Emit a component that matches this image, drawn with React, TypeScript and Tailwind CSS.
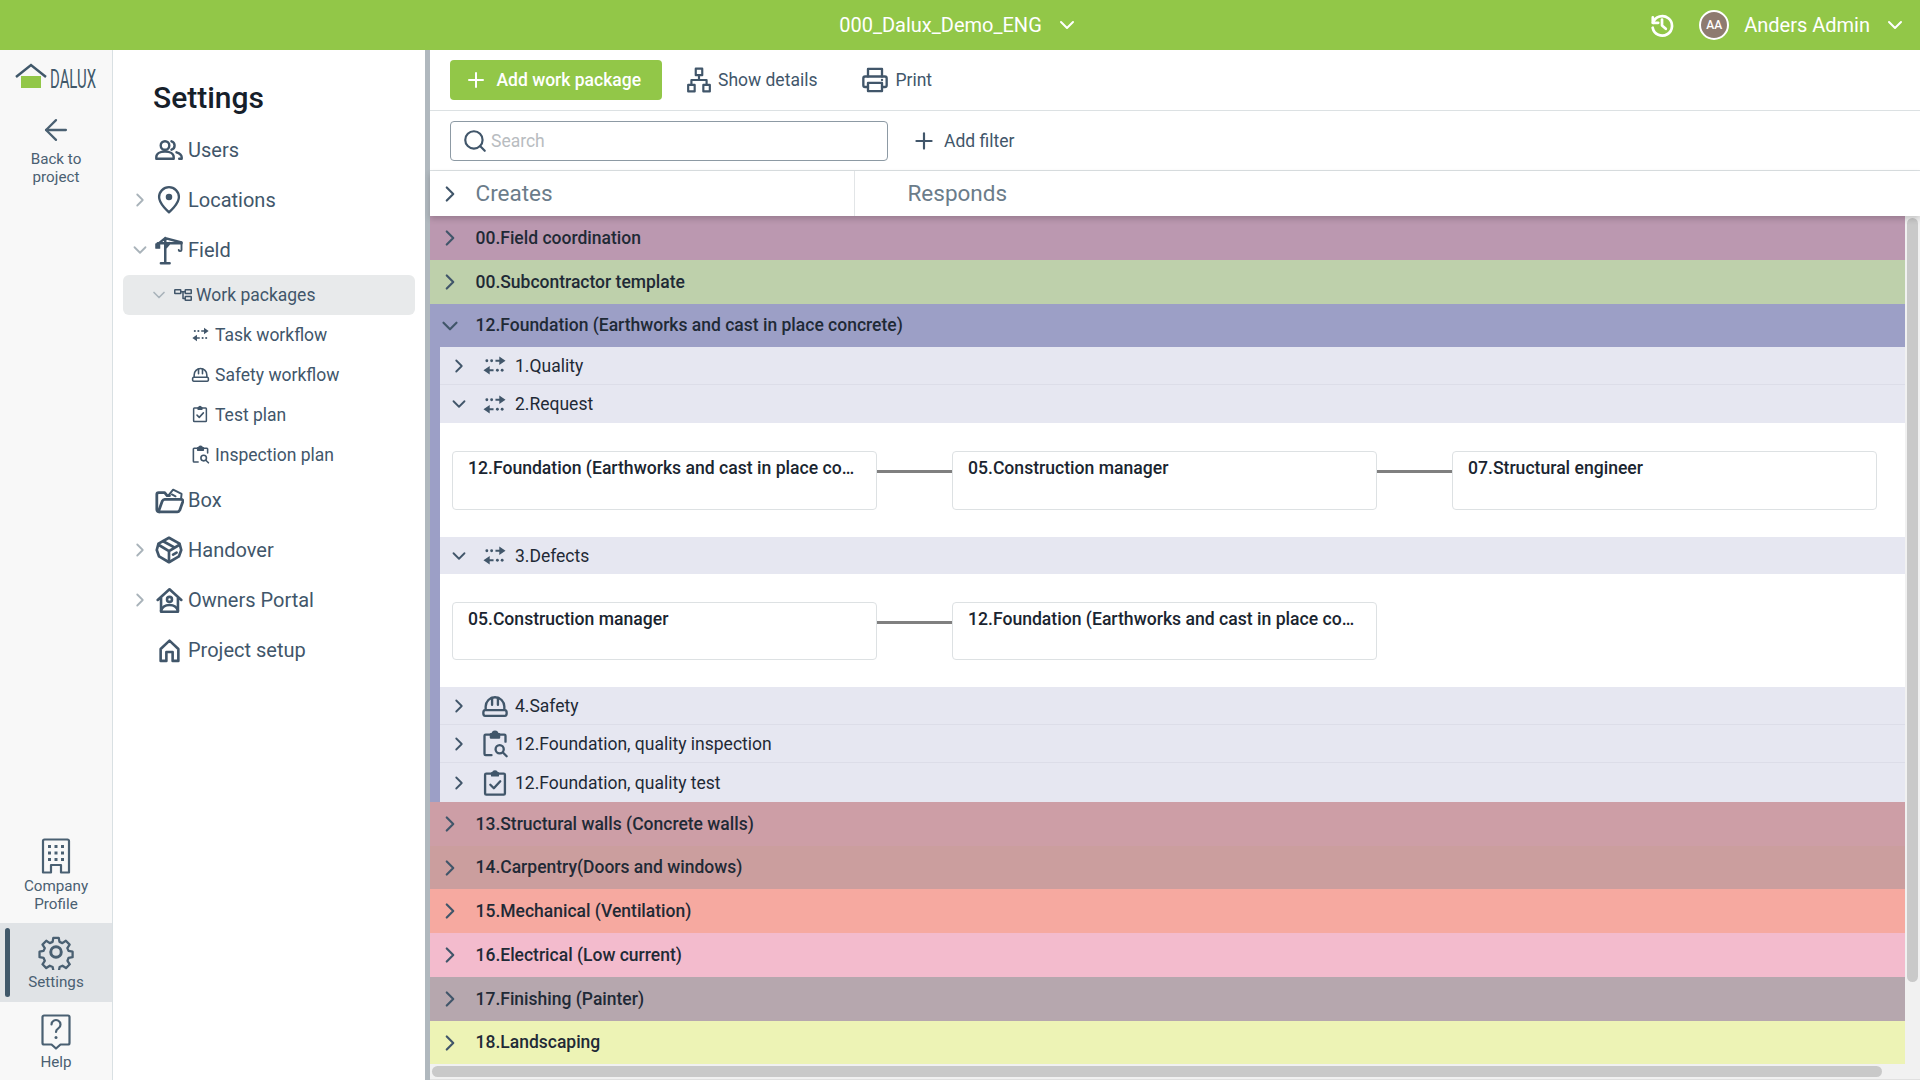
import { ArrowLeft, ChevronDown, ChevronRight, Plus, Search } from "lucide-react";
import type { ReactNode } from "react";

type IconProps = { className?: string };

const Svg = ({ className, children }: IconProps & { children: ReactNode }) => (
  <svg
    viewBox="0 0 24 24"
    fill="none"
    stroke="currentColor"
    strokeWidth={2}
    strokeLinecap="round"
    strokeLinejoin="round"
    className={className}
  >
    {children}
  </svg>
);

const UsersIcon = ({ className }: IconProps) => (
  <svg
    viewBox="0 0 28 20"
    fill="none"
    stroke="currentColor"
    strokeWidth={2.4}
    strokeLinecap="round"
    strokeLinejoin="round"
    className={className}
  >
    <circle cx="10" cy="5.500" r="4.300" />
    <path d="M1.300 18.800v-1.800c0-3.500 4-5.500 8.700-5.500s8.700 2 8.700 5.500v1.800z" />
    <path d="M16.500 1.300a4.400 4.400 0 0 1 0 8.400" />
    <path d="M21.500 12.300c3.200 1 5.200 2.500 5.200 5v1.500h-2.500" />
  </svg>
);
const PinIcon = ({ className }: IconProps) => (
  <Svg className={className}>
    <path d="M12 22.500s-8.500-7-8.500-13a8.500 8.500 0 0 1 17 0c0 6-8.500 13-8.500 13z" />
    <circle cx="12" cy="9.500" r="1.800" fill="currentColor" />
  </Svg>
);
const CraneIcon = ({ className }: IconProps) => (
  <Svg className={className}>
    <path d="M3 6.500h19M9 2.500 4 6.500M9 2.500l13 3.500M9 3v19M5.500 22.500h7M12.500 6.500l-3.500 4" />
    <path d="M1.500 7h3v3.500h-3z" fill="currentColor" strokeWidth={1} />
    <path d="M22 6v6c0 1.200-2 1.200-2.200 0" strokeWidth={1.500} />
  </Svg>
);
const PackagesIcon = ({ className }: IconProps) => (
  <Svg className={className}>
    <rect x="1" y="5" width="8" height="5" rx=".5" />
    <rect x="15" y="5" width="8" height="5" rx=".5" />
    <rect x="15" y="14" width="8" height="5" rx=".5" />
    <path d="M9 7.500h6M12 7.500v9h3" />
  </Svg>
);
const WorkflowIcon = ({ className }: IconProps) => (
  <svg viewBox="0 0 24 24" fill="currentColor" stroke="none" className={className}>
    <path d="M13 6h4V2.500L23.500 7 17 11.500V8h-4z" />
    <path d="M11 16H7v-3.500L.5 17 7 21.500V18h4z" />
    <circle cx="4" cy="7" r="1.500" />
    <circle cx="9" cy="7" r="1.500" />
    <circle cx="15" cy="17" r="1.500" />
    <circle cx="20" cy="17" r="1.500" />
  </svg>
);
const HatIcon = ({ className }: IconProps) => (
  <Svg className={className}>
    <path d="M4 15v-2.500a8 8 0 0 1 16 0V15" />
    <path d="M9.500 5v6M14.500 5v6" />
    <path d="M3.500 15.500h17c1 0 1.500 1 1.500 2.500s-.5 2.500-1.500 2.500h-17C2.500 20.500 2 19.500 2 18s.5-2.500 1.500-2.500z" />
  </Svg>
);
const ClipCheckIcon = ({ className }: IconProps) => (
  <Svg className={className}>
    <path d="M9.500 4H4.500a1 1 0 0 0-1 1v16a1 1 0 0 0 1 1h15a1 1 0 0 0 1-1V5a1 1 0 0 0-1-1h-5" />
    <path d="M9.500 5.500V3.500h1a1.500 1.500 0 0 1 3 0h1v2z" fill="currentColor" />
    <path d="m8 13.500 3 3 5.500-6" />
  </Svg>
);
const ClipSearchIcon = ({ className }: IconProps) => (
  <Svg className={className}>
    <path d="M8.500 4H4a1 1 0 0 0-1 1v15.500a1 1 0 0 0 1 1h5M15.500 4H20a1 1 0 0 1 1 1v5" />
    <path d="M8.500 6.500V3.500h1.500a2 2 0 0 1 4 0h1.500v3z" fill="currentColor" />
    <circle cx="16" cy="16.500" r="3.500" />
    <path d="m19 19.500 3 3" />
  </Svg>
);
const BoxFolderIcon = ({ className }: IconProps) => (
  <svg
    viewBox="0 0 24 24"
    fill="none"
    stroke="currentColor"
    strokeWidth={2.3}
    strokeLinecap="round"
    strokeLinejoin="round"
    className={className}
  >
    <path d="M3.500 21.500c-1.200 0-2-.8-2-2V7c0-1 .8-1.500 1.500-1.500h5l2 2.500h2" />
    <path d="M3.500 21.500h15c1 0 1.500-.6 2-1.500l2.500-7c.3-1-.3-2-1.300-2H8c-1 0-1.500.5-2 1.500l-2.500 7" />
    <path d="m11 8 4-5 7 3.500-.5 4.500M14 7l3 1.500" strokeWidth={1.600} />
  </svg>
);
const HandoverIcon = ({ className }: IconProps) => (
  <svg
    viewBox="0 0 24 24"
    fill="none"
    stroke="currentColor"
    strokeWidth={2.3}
    strokeLinecap="round"
    strokeLinejoin="round"
    className={className}
  >
    <path d="M12 1.500 3 6.500 1.500 12 3.500 17.500 12 22.500l8.500-5 2-5.500L21 6.500z" />
    <path d="M3 7.500 12 13l9-5.500M12 13v9M7 4.500l10 5.500" />
    <path d="m15.500 16 3-1.700" />
  </svg>
);
const OwnersIcon = ({ className }: IconProps) => (
  <svg
    viewBox="0 0 24 24"
    fill="none"
    stroke="currentColor"
    strokeWidth={2.3}
    strokeLinecap="round"
    strokeLinejoin="round"
    className={className}
  >
    <path d="M1.500 11.500 12 2l10.500 9.500M4.500 9.500V22h15V9.500" />
    <circle cx="12" cy="11" r="2.200" />
    <path d="M4.500 21c1-3.500 4-5 7.500-5s6.500 1.500 7.500 5" />
  </svg>
);
const HomeIcon = ({ className }: IconProps) => (
  <svg
    viewBox="0 0 24 24"
    fill="none"
    stroke="currentColor"
    strokeWidth={2.5}
    strokeLinecap="round"
    strokeLinejoin="round"
    className={className}
  >
    <path d="M3.500 22V10.500L12 2.500l8.500 8V22H15v-8.500H9V22z" />
  </svg>
);
const CompanyIcon = ({ className }: IconProps) => (
  <svg viewBox="0 0 30 36" fill="none" stroke="currentColor" strokeWidth={2.2} strokeLinejoin="round" className={className}>
    <path d="M2 3a1.500 1.500 0 0 1 1.500-1.500h23A1.500 1.500 0 0 1 28 3v31.500h-8V27H10v7.500H2z" />
    <g fill="currentColor" stroke="none">
      {[7, 13.5, 20].map((y) =>
        [7, 13.5, 20].map((x) => <rect key={`${x}-${y}`} x={x} y={y} width="3" height="3" />)
      )}
    </g>
  </svg>
);
const GearIcon = ({ className }: IconProps) => (
  <svg viewBox="0 0 24 24" fill="none" stroke="currentColor" strokeWidth={1.7} strokeLinejoin="round" className={className}>
    <path d="M10 1.500h4l.6 3 2.100.9 2.600-1.700 2.800 2.800-1.700 2.600.9 2.100 3 .6v4l-3 .6-.8 2.100 1.700 2.600-2.800 2.800-2.600-1.700-2.100.9-.6 3h-4l-.6-3-2.100-.9-2.600 1.700-2.800-2.800 1.700-2.600-.9-2.100-3-.6v-4l3-.6.900-2.100-1.700-2.600 2.800-2.800 2.600 1.700 2.100-.9z" transform="translate(1.200 1.200) scale(.9)" />
    <circle cx="12" cy="12" r="3.500" strokeWidth={2} />
  </svg>
);
const HelpIcon = ({ className }: IconProps) => (
  <svg viewBox="0 0 30 36" fill="none" stroke="currentColor" strokeWidth={2.2} strokeLinecap="round" strokeLinejoin="round" className={className}>
    <path d="M3 1.500h24a1.500 1.500 0 0 1 1.500 1.500v26a1.500 1.500 0 0 1-1.500 1.500h-7.500L15 34.500l-4.500-4H3A1.500 1.500 0 0 1 1.500 29V3A1.500 1.500 0 0 1 3 1.500z" />
    <path d="M10.500 10.500a4.500 4.500 0 1 1 6.800 3.900c-1.400.8-2.300 1.700-2.300 3.600" />
    <path d="M15 23.500h.01" strokeWidth={3} />
  </svg>
);
const HistoryIcon = ({ className }: IconProps) => (
  <svg
    viewBox="0 0 24 24"
    fill="none"
    stroke="currentColor"
    strokeWidth={2.5}
    strokeLinecap="round"
    strokeLinejoin="round"
    className={className}
  >
    <path d="M3.500 5v5h5" />
    <path d="M3.700 10a9 9 0 1 1-.3 4.500" />
    <path d="M12 7v5.500l3.500 3" />
  </svg>
);
const TreeIcon = ({ className }: IconProps) => (
  <Svg className={className}>
    <rect x="9" y="1.500" width="6" height="6" />
    <rect x="2" y="16.500" width="6" height="6" />
    <rect x="16" y="16.500" width="6" height="6" />
    <path d="M12 7.500V12M5 16.500V12h14v4.500" />
  </Svg>
);
const PrintIcon = ({ className }: IconProps) => (
  <Svg className={className}>
    <path d="M6 9V2.500h12V9" />
    <path d="M6 18H3.500A1.500 1.500 0 0 1 2 16.500v-6A1.500 1.500 0 0 1 3.500 9h17a1.500 1.500 0 0 1 1.500 1.500v6a1.500 1.500 0 0 1-1.500 1.500H18" />
    <path d="M6 14.500h12v7H6z" />
    <path d="M18 12h.01" />
  </Svg>
);

const DaluxLogo = () => (
  <svg viewBox="0 0 84 32" className="w-[84px] h-[32px] overflow-visible">
    <path d="M6 13h20v12H6z" fill="#92c748" />
    <path d="M1 14 16 2 31 14" fill="none" stroke="#40586a" strokeWidth="2.500" />
    <text
      x="35"
      y="25"
      fontSize="25"
      fontFamily="Roboto, sans-serif"
      fill="#40586a"
      textLength="46"
      lengthAdjust="spacingAndGlyphs"
    >
      DALUX
    </text>
  </svg>
);

const RailItem = ({ icon, label }: { icon: ReactNode; label: ReactNode }) => (
  <div className="flex flex-col items-center text-[15.200px] leading-[18px] text-center text-[#4a6072]">
    {icon}
    <div className="mt-[3px]">{label}</div>
  </div>
);

const navChevron = "w-[22px] h-[22px] text-[#a9b3ba] shrink-0";

const NavItem = ({ icon, label, chev }: { icon: ReactNode; label: string; chev?: "right" | "down" }) => (
  <div className="h-[50px] flex items-center text-[20px] text-[#41566a]">
    <div className="w-[30px] pl-[4px] flex justify-center">
      {chev === "right" && <ChevronRight className={navChevron} />}
      {chev === "down" && <ChevronDown className={navChevron} />}
    </div>
    <div className="w-[32px] flex justify-center">{icon}</div>
    <span className="ml-[3px]">{label}</span>
  </div>
);

const SubNavItem = ({ icon, label }: { icon: ReactNode; label: string }) => (
  <div className="h-[40px] flex items-center pl-[65px] text-[17.500px] text-[#41566a]">
    <div className="w-[24px] flex justify-center">{icon}</div>
    <span className="ml-[3px] mt-[2px]">{label}</span>
  </div>
);

const Sidebar = () => (
  <div className="w-[312px] h-full shrink-0 bg-white pt-[25px] pl-[10px] pr-[10px]">
    <h1 className="pl-[30px] h-[44px] flex items-center text-[30px] font-medium text-[#16202a]">Settings</h1>
    <div className="mt-[6px]">
      <NavItem icon={<UsersIcon className="w-[28px] h-[20px]" />} label="Users" />
      <NavItem icon={<PinIcon className="w-[28px] h-[28px]" />} label="Locations" chev="right" />
      <NavItem icon={<CraneIcon className="w-[30px] h-[30px]" />} label="Field" chev="down" />
      <div className="h-[40px] rounded-[6px] bg-[#e8eaeb] flex items-center pl-[26px] text-[17.500px] text-[#41566a]">
        <ChevronDown className="w-[20px] h-[20px] text-[#a9b3ba]" />
        <PackagesIcon className="ml-[4px] w-[20px] h-[18px]" />
        <span className="ml-[3px]">Work packages</span>
      </div>
      <div className="mt-[-1px]">
        <SubNavItem icon={<WorkflowIcon className="w-[17px] h-[17px]" />} label="Task workflow" />
        <SubNavItem icon={<HatIcon className="w-[19px] h-[19px]" />} label="Safety workflow" />
        <SubNavItem icon={<ClipCheckIcon className="w-[18px] h-[18px]" />} label="Test plan" />
        <SubNavItem icon={<ClipSearchIcon className="w-[19px] h-[19px]" />} label="Inspection plan" />
      </div>
      <div className="mt-[1px]">
        <NavItem icon={<BoxFolderIcon className="w-[29px] h-[29px]" />} label="Box" />
        <NavItem icon={<HandoverIcon className="w-[28px] h-[28px]" />} label="Handover" chev="right" />
        <NavItem icon={<OwnersIcon className="w-[27px] h-[27px]" />} label="Owners Portal" chev="right" />
        <NavItem icon={<HomeIcon className="w-[25px] h-[25px]" />} label="Project setup" />
      </div>
    </div>
  </div>
);

const Rail = () => (
  <div className="w-[113px] h-full shrink-0 bg-[#f8f8f8] border-r border-[#d9e0e3] flex flex-col">
    <div className="pt-[13px] pl-[15px]">
      <DaluxLogo />
    </div>
    <div className="mt-[18px]">
      <RailItem
        icon={<ArrowLeft className="w-[34px] h-[34px]" strokeWidth={1.6} />}
        label={
          <>
            Back to
            <br />
            project
          </>
        }
      />
    </div>
    <div className="mt-auto">
      <RailItem
        icon={<CompanyIcon className="w-[30px] h-[36px]" />}
        label={
          <>
            Company
            <br />
            Profile
          </>
        }
      />
      <div className="relative mt-[10px] h-[79px] bg-[#e0e3e6] pt-[11px]">
        <div className="absolute left-[5px] top-[5px] w-[5px] h-[69px] rounded-full bg-[#40586a]" />
        <RailItem icon={<GearIcon className="w-[36px] h-[36px]" />} label="Settings" />
      </div>
      <div className="h-[78px] pt-[12px]">
        <RailItem icon={<HelpIcon className="w-[30px] h-[36px]" />} label="Help" />
      </div>
    </div>
  </div>
);

const GroupRow = ({ label, color, open }: { label: string; color: string; open?: boolean }) => (
  <div className={`flex items-center text-[17.500px] font-medium text-[#1f2a36] ${color}`}>
    <div className="w-[45.500px] pl-[7px] flex justify-start text-[#41566a]">
      {open ? <ChevronDown className="w-[26px] h-[26px]" /> : <ChevronRight className="w-[26px] h-[26px]" />}
    </div>
    <span>{label}</span>
  </div>
);

const SubRow = ({ icon, label, open, h }: { icon: ReactNode; label: string; open?: boolean; h: string }) => (
  <div className={`flex items-center bg-[#e6e7f1] border-b border-[#dcdde8] text-[17.500px] text-[#1f2a36] ${h}`}>
    <div className="w-[38px] pl-[8px] text-[#41566a]">
      {open ? <ChevronDown className="w-[22px] h-[22px]" /> : <ChevronRight className="w-[22px] h-[22px]" />}
    </div>
    <div className="w-[33px] flex justify-center text-[#41566a]">{icon}</div>
    <span className="ml-[4px] mt-[1px]">{label}</span>
  </div>
);

const Card = ({ label, h }: { label: string; h: string }) => (
  <div className={`w-[425px] shrink-0 bg-white border border-[#dde1e3] rounded-[4px] pl-[15px] pt-[3px] text-[17.600px] font-medium text-[#1a2530] whitespace-nowrap ${h}`}>
    {label}
  </div>
);

const Connector = () => <div className="w-[75px] h-[3px] mt-[19px] shrink-0 bg-[#808080]" />;

const Tree = () => (
  <div className="flex-1 min-w-0 flex flex-col">
    <GroupRow label="00.Field coordination" color="h-[44px] bg-[#bb98b0]" />
    <GroupRow label="00.Subcontractor template" color="h-[44px] bg-[#bed0ab]" />
    <GroupRow label="12.Foundation (Earthworks and cast in place concrete)" color="h-[43px] bg-[#9c9fc6]" open />
    <div className="h-[455px] border-l-[10px] border-[#9c9fc6] flex flex-col">
      <SubRow h="h-[38px]" icon={<WorkflowIcon className="w-[23px] h-[23px]" />} label="1.Quality" />
      <SubRow h="h-[38px] border-b-0" icon={<WorkflowIcon className="w-[23px] h-[23px]" />} label="2.Request" open />
      <div className="h-[114px] bg-white pt-[28px] pl-[12px] flex">
        <Card h="h-[59px]" label="12.Foundation (Earthworks and cast in place co…" />
        <Connector />
        <Card h="h-[59px]" label="05.Construction manager" />
        <Connector />
        <Card h="h-[59px]" label="07.Structural engineer" />
      </div>
      <SubRow h="h-[37px] border-b-0" icon={<WorkflowIcon className="w-[23px] h-[23px]" />} label="3.Defects" open />
      <div className="h-[113px] bg-white pt-[28px] pl-[12px] flex">
        <Card h="h-[58px]" label="05.Construction manager" />
        <Connector />
        <Card h="h-[58px]" label="12.Foundation (Earthworks and cast in place co…" />
      </div>
      <SubRow h="h-[38px]" icon={<HatIcon className="w-[28px] h-[28px]" />} label="4.Safety" />
      <SubRow h="h-[38px]" icon={<ClipSearchIcon className="w-[28px] h-[28px]" />} label="12.Foundation, quality inspection" />
      <SubRow h="h-[39px] border-b-0" icon={<ClipCheckIcon className="w-[28px] h-[28px]" />} label="12.Foundation, quality test" />
    </div>
    <GroupRow label="13.Structural walls (Concrete walls)" color="h-[44px] bg-[#cd9ea6]" />
    <GroupRow label="14.Carpentry(Doors and windows)" color="h-[43px] bg-[#cb9e9e]" />
    <GroupRow label="15.Mechanical (Ventilation)" color="h-[44px] bg-[#f6a9a0]" />
    <GroupRow label="16.Electrical (Low current)" color="h-[44px] bg-[#f3bbcd]" />
    <GroupRow label="17.Finishing (Painter)" color="h-[44px] bg-[#b6a7ae]" />
    <GroupRow label="18.Landscaping" color="h-[43px] bg-[#edf3b5]" />
  </div>
);

const Main = () => (
  <div className="flex-1 min-w-0 h-full flex flex-col bg-white">
    <div className="h-[61px] shrink-0 border-b border-[#dce1e3] flex items-center pl-[20px] text-[17.500px] text-[#41566a]">
      <button className="h-[40px] w-[212px] rounded-[4px] bg-[#92c748] text-white font-medium flex items-center pl-[14px]">
        <Plus className="w-[24px] h-[24px]" strokeWidth={2} />
        <span className="ml-[8.500px]">Add work package</span>
      </button>
      <TreeIcon className="ml-[24px] w-[26px] h-[28px]" />
      <span className="ml-[6px]">Show details</span>
      <PrintIcon className="ml-[44px] w-[28px] h-[28px]" />
      <span className="ml-[6px]">Print</span>
    </div>
    <div className="h-[60px] shrink-0 border-b border-[#dce1e3] flex items-center pl-[20px] text-[17.500px] text-[#41566a]">
      <div className="w-[438px] h-[40px] border border-[#8d9aa4] rounded-[4px] flex items-center pl-[11px]">
        <Search className="w-[26px] h-[26px]" strokeWidth={2} />
        <span className="ml-[3px] mt-[2px] text-[#b8bcc0]">Search</span>
      </div>
      <Plus className="ml-[23px] w-[26px] h-[26px]" strokeWidth={2} />
      <span className="ml-[7px] mt-[2px]">Add filter</span>
    </div>
    <div className="relative z-10 h-[45px] shrink-0 flex items-center bg-white shadow-[0_3px_6px_rgba(0,0,0,0.18)] text-[22.500px] text-[#6b7c8a]">
      <div className="w-[425px] h-full border-r border-[#e2e5e7] flex items-center">
        <ChevronRight className="ml-[7px] w-[26px] h-[26px] text-[#41566a]" />
        <span className="ml-[12.500px]">Creates</span>
      </div>
      <span className="ml-[52.500px]">Responds</span>
    </div>
    <div className="flex-1 min-h-0 flex">
      <Tree />
      <div className="w-[15px] shrink-0 bg-[#f1f1f1] px-[2px] pt-[2px]">
        <div className="h-[764px] rounded-full bg-[#c9c9c9]" />
      </div>
    </div>
    <div className="h-[16px] shrink-0 bg-[#f1f1f1] pl-[2px] pt-[2px] border-b border-[#e0e0e0]">
      <div className="w-[1450px] h-[11px] rounded-full bg-[#c9c9c9]" />
    </div>
  </div>
);

export default function App() {
  return (
    <div className="w-[1920px] h-[1080px] overflow-hidden flex flex-col font-[family-name:Roboto,sans-serif]">
      <header className="h-[50px] shrink-0 bg-[#92c748] text-white flex items-center relative">
        <div className="flex-1 flex justify-center items-center pr-[2px]">
          <span className="text-[20px] mt-[-1px]">000_Dalux_Demo_ENG</span>
          <ChevronDown className="ml-[13px] w-[24px] h-[24px]" />
        </div>
        <div className="absolute right-0 top-0 h-[50px] flex items-center">
          <HistoryIcon className="w-[26px] h-[26px]" />
          <div className="ml-[24px] w-[30px] h-[30px] rounded-full bg-[#8e7b70] border-2 border-white flex items-center justify-center text-[12px] font-medium">
            AA
          </div>
          <span className="ml-[15px] text-[20px]">Anders Admin</span>
          <ChevronDown className="ml-[13px] mr-[13px] w-[24px] h-[24px]" />
        </div>
      </header>
      <div className="flex-1 min-h-0 flex">
        <Rail />
        <Sidebar />
        <div className="w-[5px] shrink-0 bg-[#b0b8be]" />
        <Main />
      </div>
    </div>
  );
}
